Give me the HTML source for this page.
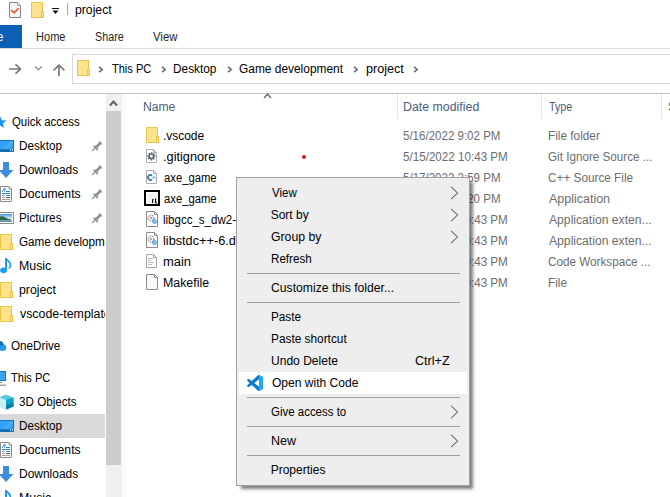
<!DOCTYPE html>
<html><head><meta charset="utf-8"><style>
html,body{margin:0;padding:0;}
body{width:670px;height:497px;overflow:hidden;position:relative;background:#fff;font-family:"Liberation Sans", sans-serif;}
.t{position:absolute;font-size:12px;line-height:14px;white-space:pre;transform-origin:0 0;}
.a{position:absolute;overflow:visible;}
.r{position:absolute;}
</style></head><body>

<svg class="a" style="left:9px;top:2px" width="13" height="17" viewBox="0 0 13 17">
<path d="M0.5 0.5 H8.5 L11.5 3.5 V15.5 H0.5 Z" fill="#F7F7F7" stroke="#858585"/><path d="M8.5 1 V3.5 H11" fill="#fff" stroke="#9A9A9A" stroke-width="0.8"/>
<path d="M2.3 8.2 L5 10.8 L9.6 6.2" fill="none" stroke="#E8561B" stroke-width="1.6"/>
</svg>
<svg class="a" style="left:31px;top:2px" width="14" height="16" viewBox="0 0 14 16">
<rect x="0.5" y="0.5" width="11" height="15" fill="#FDE38E" stroke="#E9C64B"/>
<rect x="10.5" y="9.5" width="2" height="6" fill="#FDE38E" stroke="#E9C64B"/>
</svg>
<div class="r" style="left:52px;top:8px;width:7px;height:1px;background:#111"></div>
<svg class="a" style="left:52px;top:10px" width="7" height="5" viewBox="0 0 7 5"><path d="M0.5 0.5 H6.5 L3.5 4 Z" fill="#111"/></svg>
<div class="r" style="left:67px;top:3px;width:1px;height:12px;background:#A8A8A8"></div>
<div class="r" style="left:0;top:25px;width:22px;height:23px;background:#0B5FB4"></div>
<div class="r" style="left:0;top:48px;width:670px;height:1px;background:#DADBDC"></div>
<svg class="a" style="left:8px;top:63px" width="15" height="12" viewBox="0 0 15 12">
<path d="M1 6 H12.5 M7.5 1.3 L12.5 6 L7.5 10.7" fill="none" stroke="#7A7A7A" stroke-width="1.7"/></svg>
<svg class="a" style="left:34px;top:65px" width="9" height="7" viewBox="0 0 9 7">
<path d="M1.3 1.5 L4.5 4.8 L7.7 1.5" fill="none" stroke="#8A8A8A" stroke-width="1.2"/></svg>
<svg class="a" style="left:52px;top:64px" width="14" height="13" viewBox="0 0 14 13">
<path d="M7 1.3 V12 M1.6 6.3 L7 1.1 L12.4 6.3" fill="none" stroke="#7A7A7A" stroke-width="1.7"/></svg>
<div class="r" style="left:72px;top:54px;width:620px;height:28px;border:1px solid #D9D9D9"></div>
<svg class="a" style="left:77px;top:60px" width="14" height="16" viewBox="0 0 14 16">
<rect x="0.5" y="0.5" width="11" height="15" fill="#FDE38E" stroke="#E9C64B"/>
<rect x="10.5" y="9.5" width="2" height="6" fill="#FDE38E" stroke="#E9C64B"/>
</svg>
<svg class="a" style="left:98px;top:66px" width="6" height="8" viewBox="0 0 6 8"><path d="M1 0.8 L4.2 3.5 L1 6.2" fill="none" stroke="#6B6B6B" stroke-width="1.6"/></svg>
<svg class="a" style="left:160.5px;top:66px" width="6" height="8" viewBox="0 0 6 8"><path d="M1 0.8 L4.2 3.5 L1 6.2" fill="none" stroke="#6B6B6B" stroke-width="1.6"/></svg>
<svg class="a" style="left:226.5px;top:66px" width="6" height="8" viewBox="0 0 6 8"><path d="M1 0.8 L4.2 3.5 L1 6.2" fill="none" stroke="#6B6B6B" stroke-width="1.6"/></svg>
<svg class="a" style="left:352.5px;top:66px" width="6" height="8" viewBox="0 0 6 8"><path d="M1 0.8 L4.2 3.5 L1 6.2" fill="none" stroke="#6B6B6B" stroke-width="1.6"/></svg>
<svg class="a" style="left:413px;top:66px" width="6" height="8" viewBox="0 0 6 8"><path d="M1 0.8 L4.2 3.5 L1 6.2" fill="none" stroke="#6B6B6B" stroke-width="1.6"/></svg>
<div class="r" style="left:0;top:93px;width:670px;height:1px;background:#C2C2C2"></div>
<div class="r" style="left:0;top:414px;width:105px;height:24px;background:#D9D9D9"></div>
<div class="r" style="left:106px;top:94px;width:16px;height:403px;background:#F0F0F0"></div>
<div class="r" style="left:106px;top:111px;width:15px;height:354px;background:#CDCDCD"></div>
<svg class="a" style="left:108px;top:98px" width="12" height="10" viewBox="0 0 12 10">
<path d="M2 7.5 L5.5 3.5 L9 7.5" fill="none" stroke="#606060" stroke-width="2"/></svg>
<div class="r" style="left:124px;top:94px;width:1px;height:403px;background:#F3F3F3"></div>
<svg class="a" style="left:0px;top:116px" width="8" height="13" viewBox="0 0 8 13">
<path d="M0 0 L1.8 4.2 L6.5 4.6 L2.9 7.6 L4 12 L0 9.6 L-4 12 L-2.9 7.6 L-6.5 4.6 L-1.8 4.2 Z" fill="#1E90F0"/>
</svg>
<svg class="a" style="left:0px;top:140px" width="16" height="13" viewBox="0 0 16 13">
<rect x="-1.5" y="0.5" width="15" height="11" fill="#33A2F4" stroke="#1273C4"/>
<path d="M3 9.5 L11.5 1 L13 1 L13 2.5 L6 9.5 Z" fill="#6CC0FA" opacity="0.45"/>
<rect x="-1" y="9.5" width="14" height="1.5" fill="#0F5E9E"/>
<rect x="10" y="9.5" width="1" height="1.2" fill="#fff"/><rect x="12" y="9.5" width="1" height="1.2" fill="#fff"/>
</svg>
<svg class="a" style="left:0px;top:162px" width="16" height="17" viewBox="0 0 16 17">
<path d="M3 0 H9 V8 H13.5 L6 16 L-1.5 8 H3 Z" fill="#3C8FE0"/>
</svg>
<svg class="a" style="left:0px;top:186px" width="14" height="17" viewBox="0 0 14 17">
<path d="M0.5 0.5 H9 L11.5 3 V15.5 H0.5 Z" fill="#fff" stroke="#8C8C8C"/>
<path d="M9 0.5 V3 H11.5" fill="none" stroke="#8C8C8C"/>
<path d="M2.2 5.8 L4.6 2.2 L5.4 2.2 L4.6 5.8" fill="none" stroke="#1E88E5" stroke-width="1"/>
<rect x="6" y="5" width="4" height="1" fill="#1E88E5"/>
<rect x="2" y="7" width="8" height="1" fill="#1E88E5"/>
<rect x="2" y="9" width="3" height="1" fill="#A0A0A0"/><rect x="6" y="9" width="4" height="1" fill="#4A90D9"/>
<rect x="2" y="11" width="3" height="1" fill="#A0A0A0"/><rect x="6" y="11" width="4" height="1" fill="#3A6B3A"/>
<rect x="2" y="13" width="8" height="1" fill="#A0A0A0"/>
</svg>
<svg class="a" style="left:0px;top:212px" width="15" height="13" viewBox="0 0 15 13">
<rect x="-1.5" y="0.5" width="15" height="11" fill="#fff" stroke="#8C8C8C"/>
<defs><linearGradient id="sky" x1="0" y1="0" x2="0" y2="1"><stop offset="0" stop-color="#4A96E6"/><stop offset="0.5" stop-color="#CFE3F5"/><stop offset="1" stop-color="#DDEBF7"/></linearGradient></defs>
<rect x="-1" y="2" width="13" height="8" fill="url(#sky)"/>
<path d="M-1 5 Q2 3.6 5 5.2 Q8 7 11 7.4 V8.5 H-1 Z" fill="#2F6B3E"/>
<rect x="-1" y="8.5" width="13" height="1.5" fill="#5F93C8"/>
</svg>
<svg class="a" style="left:0px;top:234px" width="14" height="16" viewBox="0 0 14 16">
<rect x="0.5" y="0.5" width="11" height="15" fill="#FDE38E" stroke="#E9C64B"/>
<rect x="10.5" y="9.5" width="2" height="6" fill="#FDE38E" stroke="#E9C64B"/>
</svg>
<svg class="a" style="left:0px;top:257px" width="12" height="17" viewBox="0 0 12 17">
<path d="M5 1 H7 V13 A3.5 2.8 0 1 1 5 10.8 Z" fill="#1E9BF0"/>
<path d="M6.5 2.5 Q10.5 5 10.5 8.5 Q10.5 10 9.3 11" fill="none" stroke="#1E9BF0" stroke-width="1.6" stroke-linecap="round"/>
</svg>
<svg class="a" style="left:0px;top:282px" width="14" height="16" viewBox="0 0 14 16">
<rect x="0.5" y="0.5" width="11" height="15" fill="#FDE38E" stroke="#E9C64B"/>
<rect x="10.5" y="9.5" width="2" height="6" fill="#FDE38E" stroke="#E9C64B"/>
</svg>
<svg class="a" style="left:0px;top:306px" width="14" height="16" viewBox="0 0 14 16">
<rect x="0.5" y="0.5" width="11" height="15" fill="#FDE38E" stroke="#E9C64B"/>
<rect x="10.5" y="9.5" width="2" height="6" fill="#FDE38E" stroke="#E9C64B"/>
</svg>
<svg class="a" style="left:0px;top:340px" width="8" height="11" viewBox="0 0 8 11">
<path d="M-4 10.5 V2.5 Q-1 0.3 1.8 1.5 Q3.4 2.6 3.6 4.6 Q6.2 5 6.2 7.8 Q6.2 10.5 3.6 10.5 Z" fill="#0C6DC4"/>
<path d="M-4 10.5 V7 Q0 5 3.6 5.2 Q6.2 5.4 6.2 7.9 Q6.2 10.5 3.6 10.5 Z" fill="#2A9CE6"/>
</svg>
<svg class="a" style="left:0px;top:371px" width="8" height="16" viewBox="0 0 8 16">
<rect x="-6.5" y="0.5" width="12" height="9" fill="#3AA6F3" stroke="#1A6FB5"/>
<rect x="-3" y="11" width="5" height="1" fill="#7A8A99"/>
<rect x="-6" y="13.5" width="12" height="1.5" fill="#9AA7B3"/>
</svg>
<svg class="a" style="left:0px;top:394px" width="15" height="16" viewBox="0 0 15 16">
<path d="M-1 3.5 L6 0.5 L13.5 3.5 L13.5 12.5 L6 15.5 L-1 12.5 Z" fill="#5CCBDD"/>
<path d="M-1 3.5 L6 6 L6 15.5 L-1 12.5 Z" fill="#C9EEF4"/>
<path d="M6 6 L13.5 3.5 L13.5 12.5 L6 15.5 Z" fill="#0AA3CB"/>
<path d="M6 11 L13.5 9 L13.5 12.5 L6 15.5 Z" fill="#0B7FA6"/>
</svg>
<svg class="a" style="left:0px;top:420px" width="16" height="13" viewBox="0 0 16 13">
<rect x="-1.5" y="0.5" width="15" height="11" fill="#33A2F4" stroke="#1273C4"/>
<path d="M3 9.5 L11.5 1 L13 1 L13 2.5 L6 9.5 Z" fill="#6CC0FA" opacity="0.45"/>
<rect x="-1" y="9.5" width="14" height="1.5" fill="#0F5E9E"/>
<rect x="10" y="9.5" width="1" height="1.2" fill="#fff"/><rect x="12" y="9.5" width="1" height="1.2" fill="#fff"/>
</svg>
<svg class="a" style="left:0px;top:442px" width="14" height="17" viewBox="0 0 14 17">
<path d="M0.5 0.5 H9 L11.5 3 V15.5 H0.5 Z" fill="#fff" stroke="#8C8C8C"/>
<path d="M9 0.5 V3 H11.5" fill="none" stroke="#8C8C8C"/>
<path d="M2.2 5.8 L4.6 2.2 L5.4 2.2 L4.6 5.8" fill="none" stroke="#1E88E5" stroke-width="1"/>
<rect x="6" y="5" width="4" height="1" fill="#1E88E5"/>
<rect x="2" y="7" width="8" height="1" fill="#1E88E5"/>
<rect x="2" y="9" width="3" height="1" fill="#A0A0A0"/><rect x="6" y="9" width="4" height="1" fill="#4A90D9"/>
<rect x="2" y="11" width="3" height="1" fill="#A0A0A0"/><rect x="6" y="11" width="4" height="1" fill="#3A6B3A"/>
<rect x="2" y="13" width="8" height="1" fill="#A0A0A0"/>
</svg>
<svg class="a" style="left:0px;top:466px" width="16" height="17" viewBox="0 0 16 17">
<path d="M3 0 H9 V8 H13.5 L6 16 L-1.5 8 H3 Z" fill="#3C8FE0"/>
</svg>
<svg class="a" style="left:0px;top:489px" width="12" height="17" viewBox="0 0 12 17">
<path d="M5 1 H7 V13 A3.5 2.8 0 1 1 5 10.8 Z" fill="#1E9BF0"/>
<path d="M6.5 2.5 Q10.5 5 10.5 8.5 Q10.5 10 9.3 11" fill="none" stroke="#1E9BF0" stroke-width="1.6" stroke-linecap="round"/>
</svg>
<svg class="a" style="left:88px;top:138px" width="16" height="16" viewBox="0 0 16 16">
<path d="M4.5 12.5 L7.5 9.5" stroke="#8A939B" stroke-width="1.3" stroke-linecap="round"/>
<path d="M4.8 8 L8 7.6 L10.8 4.6 L10.8 3.6 L11.6 3 L14.4 5.8 L13.8 6.6 L12.8 6.6 L9.8 9.4 L9.6 12.4 L9 12.8 Z" fill="#8A939B"/>
</svg>
<svg class="a" style="left:88px;top:162px" width="16" height="16" viewBox="0 0 16 16">
<path d="M4.5 12.5 L7.5 9.5" stroke="#8A939B" stroke-width="1.3" stroke-linecap="round"/>
<path d="M4.8 8 L8 7.6 L10.8 4.6 L10.8 3.6 L11.6 3 L14.4 5.8 L13.8 6.6 L12.8 6.6 L9.8 9.4 L9.6 12.4 L9 12.8 Z" fill="#8A939B"/>
</svg>
<svg class="a" style="left:88px;top:186px" width="16" height="16" viewBox="0 0 16 16">
<path d="M4.5 12.5 L7.5 9.5" stroke="#8A939B" stroke-width="1.3" stroke-linecap="round"/>
<path d="M4.8 8 L8 7.6 L10.8 4.6 L10.8 3.6 L11.6 3 L14.4 5.8 L13.8 6.6 L12.8 6.6 L9.8 9.4 L9.6 12.4 L9 12.8 Z" fill="#8A939B"/>
</svg>
<svg class="a" style="left:88px;top:210px" width="16" height="16" viewBox="0 0 16 16">
<path d="M4.5 12.5 L7.5 9.5" stroke="#8A939B" stroke-width="1.3" stroke-linecap="round"/>
<path d="M4.8 8 L8 7.6 L10.8 4.6 L10.8 3.6 L11.6 3 L14.4 5.8 L13.8 6.6 L12.8 6.6 L9.8 9.4 L9.6 12.4 L9 12.8 Z" fill="#8A939B"/>
</svg>
<svg class="a" style="left:263px;top:93px" width="10" height="7" viewBox="0 0 10 7">
<path d="M1 5 L4.5 1.2 L8 5" fill="none" stroke="#5A5A5A" stroke-width="1.2"/></svg>
<div class="r" style="left:397px;top:94px;width:1px;height:25px;background:#E5E5E5"></div>
<div class="r" style="left:541px;top:94px;width:1px;height:25px;background:#E5E5E5"></div>
<div class="r" style="left:661px;top:94px;width:1px;height:25px;background:#E5E5E5"></div>
<svg class="a" style="left:146px;top:127px" width="14" height="16" viewBox="0 0 14 16">
<rect x="0.5" y="0.5" width="11" height="15" fill="#FDE38E" stroke="#E9C64B"/>
<rect x="10.5" y="9.5" width="2" height="6" fill="#FDE38E" stroke="#E9C64B"/>
</svg>
<svg class="a" style="left:146px;top:149px" width="12" height="15" viewBox="0 0 12 15"><path d="M0.5 0.5 H7.5 L10.5 3.5 V13.5 H0.5 Z" fill="#fff" stroke="#ADADAD"/><path d="M7.5 0.5 V3.5 H10.5" fill="none" stroke="#ADADAD"/><circle cx="5.4" cy="7.3" r="2.3" fill="none" stroke="#56646F" stroke-width="1.7"/><circle cx="5.4" cy="7.3" r="3.5" fill="none" stroke="#56646F" stroke-width="1.3" stroke-dasharray="1.35 1.4" transform="rotate(-12 5.4 7.3)"/></svg>
<svg class="a" style="left:146px;top:170px" width="12" height="15" viewBox="0 0 12 15"><path d="M0.5 0.5 H7.5 L10.5 3.5 V13.5 H0.5 Z" fill="#fff" stroke="#ADADAD"/><path d="M7.5 0.5 V3.5 H10.5" fill="none" stroke="#ADADAD"/><path d="M6.1 5.5 A2.5 2.5 0 1 0 6.1 9.3" fill="none" stroke="#2E7FA6" stroke-width="1.7"/><rect x="6.3" y="6.9" width="3.2" height="1" fill="#5A9CC0"/><rect x="7.4" y="6" width="1" height="2.8" fill="#8CB8D4"/></svg>
<svg class="a" style="left:144px;top:190px" width="16" height="16" viewBox="0 0 16 16"><rect x="1" y="1" width="14" height="14" fill="#F2F2F2" stroke="#000" stroke-width="2"/><rect x="2" y="2" width="12" height="1" fill="#fff"/><rect x="2" y="2" width="1" height="12" fill="#fff"/><path d="M8.6 13 V10.2 Q8.6 9.4 9.6 9.4" fill="none" stroke="#000" stroke-width="1.1"/><path d="M11.6 8.6 V12.3 Q11.6 13 12.6 13 H13" fill="none" stroke="#000" stroke-width="1.1"/></svg>
<svg class="a" style="left:146px;top:211px" width="13" height="17" viewBox="0 0 13 17"><path d="M0.5 0.5 H8.5 L11.5 3.5 V15.5 H0.5 Z" fill="#fff" stroke="#8C8C8C"/><path d="M8.5 0.5 V3.5 H11.5" fill="none" stroke="#8C8C8C"/><circle cx="5" cy="7" r="2.8" fill="none" stroke="#8A8A8A" stroke-width="1.3" stroke-dasharray="1.2 0.8"/><circle cx="5" cy="7" r="1" fill="#8A8A8A"/><circle cx="8.5" cy="10.5" r="2" fill="#7EC3F0" stroke="#3E9BDB" stroke-width="0.8"/></svg>
<svg class="a" style="left:146px;top:232px" width="13" height="17" viewBox="0 0 13 17"><path d="M0.5 0.5 H8.5 L11.5 3.5 V15.5 H0.5 Z" fill="#fff" stroke="#8C8C8C"/><path d="M8.5 0.5 V3.5 H11.5" fill="none" stroke="#8C8C8C"/><circle cx="5" cy="7" r="2.8" fill="none" stroke="#8A8A8A" stroke-width="1.3" stroke-dasharray="1.2 0.8"/><circle cx="5" cy="7" r="1" fill="#8A8A8A"/><circle cx="8.5" cy="10.5" r="2" fill="#7EC3F0" stroke="#3E9BDB" stroke-width="0.8"/></svg>
<svg class="a" style="left:146px;top:254px" width="12" height="15" viewBox="0 0 12 15"><path d="M0.5 0.5 H7.5 L10.5 3.5 V13.5 H0.5 Z" fill="#fff" stroke="#A8A8A8"/><path d="M7.5 0.5 V3.5 H10.5" fill="none" stroke="#A8A8A8"/><rect x="2" y="4" width="5" height="0.9" fill="#B8B8B8"/><rect x="2" y="6" width="3" height="0.9" fill="#B8B8B8"/><rect x="2" y="8" width="6" height="0.9" fill="#B8B8B8"/><rect x="2" y="10" width="4" height="0.9" fill="#B8B8B8"/></svg>
<svg class="a" style="left:146px;top:274px" width="13" height="17" viewBox="0 0 13 17"><path d="M0.5 0.5 H8.5 L11.5 3.5 V15.5 H0.5 Z" fill="#F8F8F8" stroke="#8C8C8C"/><path d="M8.5 0.5 V3.5 H11.5" fill="none" stroke="#8C8C8C"/></svg>
<div style="position:absolute;left:0;top:0;width:105px;height:497px;overflow:hidden">
<div class="t" style="left:11.50px;top:115px;color:#000;transform:scaleX(0.9479)">Quick access</div>
<div class="t" style="left:18.63px;top:139px;color:#000;transform:scaleX(0.9744)">Desktop</div>
<div class="t" style="left:18.60px;top:163px;color:#000;transform:scaleX(0.9966)">Downloads</div>
<div class="t" style="left:18.58px;top:187px;color:#000;transform:scaleX(1.0153)">Documents</div>
<div class="t" style="left:18.62px;top:211px;color:#000;transform:scaleX(0.9810)">Pictures</div>
<div class="t" style="left:18.62px;top:235px;color:#000;transform:scaleX(0.9750)">Game development</div>
<div class="t" style="left:18.57px;top:259px;color:#000;transform:scaleX(1.0300)">Music</div>
<div class="t" style="left:18.57px;top:283px;color:#000;transform:scaleX(1.0257)">project</div>
<div class="t" style="left:19.60px;top:307px;color:#000;transform:scaleX(1.0300)">vscode-template</div>
<div class="t" style="left:11.30px;top:339px;color:#000;transform:scaleX(0.9740)">OneDrive</div>
<div class="t" style="left:11.30px;top:371px;color:#000;transform:scaleX(0.9214)">This PC</div>
<div class="t" style="left:18.63px;top:395px;color:#000;transform:scaleX(0.9707)">3D Objects</div>
<div class="t" style="left:18.63px;top:419px;color:#000;transform:scaleX(0.9744)">Desktop</div>
<div class="t" style="left:18.58px;top:443px;color:#000;transform:scaleX(1.0153)">Documents</div>
<div class="t" style="left:18.60px;top:467px;color:#000;transform:scaleX(0.9966)">Downloads</div>
<div class="t" style="left:18.57px;top:491px;color:#000;transform:scaleX(1.0300)">Music</div>
</div>
<div class="t" style="left:74.78px;top:3px;color:#000;transform:scaleX(1.0171)">project</div>
<div class="t" style="left:-15.45px;top:30px;color:#fff;transform:scaleX(0.9500)">File</div>
<div class="t" style="left:35.68px;top:30px;color:#262626;transform:scaleX(0.9226)">Home</div>
<div class="t" style="left:94.60px;top:30px;color:#262626;transform:scaleX(0.8968)">Share</div>
<div class="t" style="left:153.40px;top:30px;color:#262626;transform:scaleX(0.9462)">View</div>
<div class="t" style="left:112.30px;top:62px;color:#000;transform:scaleX(0.9190)">This PC</div>
<div class="t" style="left:173.01px;top:62px;color:#000;transform:scaleX(0.9860)">Desktop</div>
<div class="t" style="left:239.31px;top:62px;color:#000;transform:scaleX(0.9933)">Game development</div>
<div class="t" style="left:366.15px;top:62px;color:#000;transform:scaleX(1.0486)">project</div>
<div class="t" style="left:142.59px;top:100px;color:#4C607A;transform:scaleX(1.0097)">Name</div>
<div class="t" style="left:403.37px;top:100px;color:#4C607A;transform:scaleX(1.0306)">Date modified</div>
<div class="t" style="left:548.70px;top:100px;color:#4C607A;transform:scaleX(0.8923)">Type</div>
<div class="t" style="left:667.73px;top:100px;color:#4C607A;transform:scaleX(0.9700)">Size</div>
<div class="t" style="left:163.20px;top:129px;color:#000;transform:scaleX(0.9950)">.vscode</div>
<div class="t" style="left:403.44px;top:129px;color:#6D6D6D;transform:scaleX(0.9610)">5/16/2022 9:02 PM</div>
<div class="t" style="left:547.72px;top:129px;color:#6D6D6D;transform:scaleX(0.9846)">File folder</div>
<div class="t" style="left:163.14px;top:150px;color:#000;transform:scaleX(1.0625)">.gitignore</div>
<div class="t" style="left:403.43px;top:150px;color:#6D6D6D;transform:scaleX(0.9698)">5/15/2022 10:43 PM</div>
<div class="t" style="left:547.73px;top:150px;color:#6D6D6D;transform:scaleX(0.9733)">Git Ignore Source ...</div>
<div class="t" style="left:164.20px;top:171px;color:#000;transform:scaleX(0.9393)">axe_game</div>
<div class="t" style="left:403.44px;top:171px;color:#6D6D6D;transform:scaleX(0.9620)">5/17/2022 2:59 PM</div>
<div class="t" style="left:547.72px;top:171px;color:#6D6D6D;transform:scaleX(0.9812)">C++ Source File</div>
<div class="t" style="left:164.20px;top:192px;color:#000;transform:scaleX(0.9393)">axe_game</div>
<div class="t" style="left:403.44px;top:192px;color:#6D6D6D;transform:scaleX(0.9620)">5/17/2022 3:20 PM</div>
<div class="t" style="left:548.70px;top:192px;color:#6D6D6D;transform:scaleX(1.0397)">Application</div>
<div class="t" style="left:163.04px;top:213px;color:#000;transform:scaleX(0.9600)">libgcc_s_dw2-1.dll</div>
<div class="t" style="left:403.43px;top:213px;color:#6D6D6D;transform:scaleX(0.9698)">5/15/2022 10:43 PM</div>
<div class="t" style="left:548.70px;top:213px;color:#6D6D6D;transform:scaleX(1.0130)">Application exten...</div>
<div class="t" style="left:162.94px;top:234px;color:#000;transform:scaleX(1.0600)">libstdc++-6.dll</div>
<div class="t" style="left:403.43px;top:234px;color:#6D6D6D;transform:scaleX(0.9698)">5/15/2022 10:43 PM</div>
<div class="t" style="left:548.70px;top:234px;color:#6D6D6D;transform:scaleX(1.0130)">Application exten...</div>
<div class="t" style="left:163.12px;top:255px;color:#000;transform:scaleX(1.0750)">main</div>
<div class="t" style="left:403.43px;top:255px;color:#6D6D6D;transform:scaleX(0.9698)">5/15/2022 10:43 PM</div>
<div class="t" style="left:547.72px;top:255px;color:#6D6D6D;transform:scaleX(0.9757)">Code Workspace ...</div>
<div class="t" style="left:163.17px;top:276px;color:#000;transform:scaleX(1.0302)">Makefile</div>
<div class="t" style="left:403.43px;top:276px;color:#6D6D6D;transform:scaleX(0.9698)">5/15/2022 10:43 PM</div>
<div class="t" style="left:547.72px;top:276px;color:#6D6D6D;transform:scaleX(0.9778)">File</div>
<div class="r" style="left:302px;top:155px;width:4px;height:4px;border-radius:50%;background:#E81818"></div>
<div class="r" style="left:236px;top:177px;width:232px;height:307px;border:1px solid #A0A0A0;background:#EEEEEE;box-shadow:4px 4px 3px -1px rgba(0,0,0,0.5)"></div>
<div class="r" style="left:239px;top:372px;width:228px;height:22px;background:#FFFFFF"></div>
<div class="r" style="left:247px;top:273px;width:213px;height:1px;background:#A0A0A0"></div>
<div class="r" style="left:247px;top:302px;width:213px;height:1px;background:#A0A0A0"></div>
<div class="r" style="left:247px;top:397px;width:213px;height:1px;background:#A0A0A0"></div>
<div class="r" style="left:247px;top:426px;width:213px;height:1px;background:#A0A0A0"></div>
<div class="r" style="left:247px;top:455px;width:213px;height:1px;background:#A0A0A0"></div>
<svg class="a" style="left:450px;top:186px" width="9" height="14" viewBox="0 0 9 14"><path d="M1 0.8 L7.6 7 L1 13.2" fill="none" stroke="#3C3C3C" stroke-width="1"/></svg>
<svg class="a" style="left:450px;top:208px" width="9" height="14" viewBox="0 0 9 14"><path d="M1 0.8 L7.6 7 L1 13.2" fill="none" stroke="#3C3C3C" stroke-width="1"/></svg>
<svg class="a" style="left:450px;top:230px" width="9" height="14" viewBox="0 0 9 14"><path d="M1 0.8 L7.6 7 L1 13.2" fill="none" stroke="#3C3C3C" stroke-width="1"/></svg>
<svg class="a" style="left:450px;top:405px" width="9" height="14" viewBox="0 0 9 14"><path d="M1 0.8 L7.6 7 L1 13.2" fill="none" stroke="#3C3C3C" stroke-width="1"/></svg>
<svg class="a" style="left:450px;top:434px" width="9" height="14" viewBox="0 0 9 14"><path d="M1 0.8 L7.6 7 L1 13.2" fill="none" stroke="#3C3C3C" stroke-width="1"/></svg>
<svg class="a" style="left:247px;top:375px" width="16" height="16" viewBox="0 0 100 100">
<path d="M96.46 10.8 75.86.87a6.23 6.23 0 0 0-7.1 1.2L29.35 38.04 12.19 25.01a4.16 4.16 0 0 0-5.32.24l-5.5 5a4.17 4.17 0 0 0 0 6.16L16.25 50 1.37 63.58a4.17 4.17 0 0 0 0 6.16l5.5 5a4.16 4.16 0 0 0 5.32.24l17.16-13.03 39.41 35.96a6.22 6.22 0 0 0 7.1 1.2l20.6-9.91A6.24 6.24 0 0 0 100 83.57V16.43a6.24 6.24 0 0 0-3.54-5.63zM75.02 72.7 45.11 50l29.91-22.7z" fill="#0A7BD1"/>
<path d="M96.46 10.8 75.86.87a6.23 6.23 0 0 0-7.1 1.2 L75 1 V99 L75.86 99.13 l20.6-9.91A6.24 6.24 0 0 0 100 83.57V16.43a6.24 6.24 0 0 0-3.54-5.63z" fill="#23A7F2"/>
</svg>
<div class="t" style="left:271.70px;top:186px;color:#000;transform:scaleX(0.9577)">View</div>
<div class="t" style="left:270.70px;top:208px;color:#000;transform:scaleX(1.0000)">Sort by</div>
<div class="t" style="left:270.68px;top:230px;color:#000;transform:scaleX(1.0208)">Group by</div>
<div class="t" style="left:270.73px;top:252px;color:#000;transform:scaleX(0.9675)">Refresh</div>
<div class="t" style="left:270.69px;top:281px;color:#000;transform:scaleX(1.0143)">Customize this folder...</div>
<div class="t" style="left:270.72px;top:310px;color:#000;transform:scaleX(0.9793)">Paste</div>
<div class="t" style="left:270.71px;top:332px;color:#000;transform:scaleX(0.9868)">Paste shortcut</div>
<div class="t" style="left:270.70px;top:354px;color:#000;transform:scaleX(1.0046)">Undo Delete</div>
<div class="t" style="left:271.70px;top:376px;color:#000;transform:scaleX(1.0035)">Open with Code</div>
<div class="t" style="left:270.74px;top:405px;color:#000;transform:scaleX(0.9558)">Give access to</div>
<div class="t" style="left:270.66px;top:434px;color:#000;transform:scaleX(1.0435)">New</div>
<div class="t" style="left:270.70px;top:463px;color:#000;transform:scaleX(1.0000)">Properties</div>
<div class="t" style="left:415.25px;top:354px;color:#000;transform:scaleX(1.0500)">Ctrl+Z</div>
</body></html>
